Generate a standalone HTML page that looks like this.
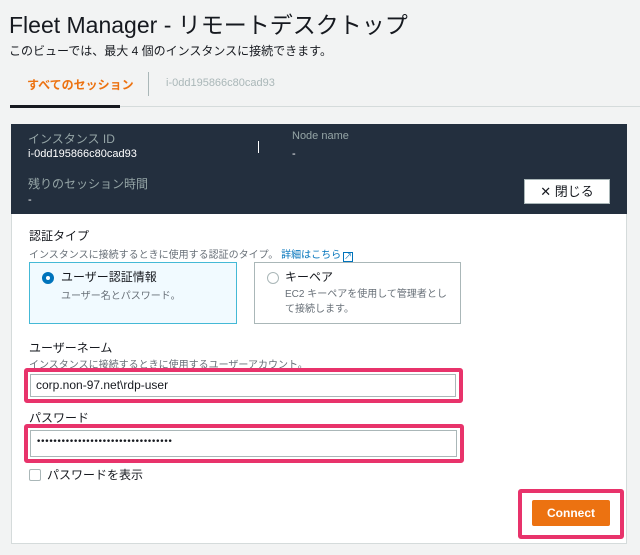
<!DOCTYPE html>
<html><head><meta charset="utf-8"><style>
*{margin:0;padding:0;box-sizing:border-box}
body{width:640px;height:555px;background:#f2f3f3;font-family:"Liberation Sans","Noto Sans CJK JP",sans-serif;color:#16191f;position:relative;overflow:hidden}
.a{position:absolute;white-space:nowrap}
</style></head><body>
<div class="a" style="left:9px;top:6px;font-size:23px;color:#16191f">Fleet Manager - リモートデスクトップ</div>
<div class="a" style="left:9px;top:42px;font-size:12px">このビューでは、最大 4 個のインスタンスに接続できます。</div>
<div class="a" style="left:27px;top:76px;font-size:12px;font-weight:bold;color:#ec7211">すべてのセッション</div>
<div class="a" style="left:148px;top:72px;width:1px;height:24px;background:#aab7b8"></div>
<div class="a" style="left:166px;top:77px;font-size:11px;color:#aab7b8">i-0dd195866c80cad93</div>
<div class="a" style="left:10px;top:106px;width:630px;height:1px;background:#d5dbdb"></div>
<div class="a" style="left:10px;top:105px;width:110px;height:3px;background:#16191f"></div>

<div class="a" style="left:11px;top:124px;width:616px;height:420px;background:#fff;border:1px solid #d5dbdb"></div>
<div class="a" style="left:11px;top:124px;width:616px;height:90px;background:#232f3e"></div>
<div class="a" style="left:28px;top:130px;font-size:12px;color:#95a5a6">インスタンス ID</div>
<div class="a" style="left:28px;top:148px;font-size:11px;color:#fff">i-0dd195866c80cad93</div>
<div class="a" style="left:258px;top:141px;width:1px;height:12px;background:#fff"></div>
<div class="a" style="left:292px;top:130px;font-size:11px;color:#95a5a6">Node name</div>
<div class="a" style="left:292px;top:148px;font-size:11px;color:#fff">-</div>
<div class="a" style="left:28px;top:175px;font-size:12px;color:#95a5a6">残りのセッション時間</div>
<div class="a" style="left:28px;top:194px;font-size:11px;color:#fff">-</div>
<div class="a" style="left:524px;top:179px;width:86px;height:25px;background:#fff;border:1px solid #aab7b8;font-size:13px;text-align:center;line-height:23px;color:#16191f">✕ 閉じる</div>

<div class="a" style="left:29px;top:227px;font-size:12px">認証タイプ</div>
<div class="a" style="left:29px;top:246px;font-size:10px;color:#687078">インスタンスに接続するときに使用する認証のタイプ。 <span style="color:#0073bb">詳細はこちら</span><span style="color:#0073bb;border:1.5px solid #0073bb;display:inline-block;width:10px;height:10px;font-size:8px;line-height:7px;vertical-align:-1px;margin-left:2px">↗</span></div>
<div class="a" style="left:29px;top:262px;width:208px;height:62px;background:#f1faff;border:1px solid #44b9d6"></div>
<div class="a" style="left:42px;top:272px;width:12px;height:12px;border-radius:50%;border:4px solid #0073bb;background:#fff"></div>
<div class="a" style="left:61px;top:268px;font-size:12px">ユーザー認証情報</div>
<div class="a" style="left:61px;top:287px;font-size:10px;color:#687078">ユーザー名とパスワード。</div>
<div class="a" style="left:254px;top:262px;width:207px;height:62px;background:#fff;border:1px solid #aab7b8"></div>
<div class="a" style="left:267px;top:272px;width:12px;height:12px;border-radius:50%;border:1px solid #aab7b8"></div>
<div class="a" style="left:285px;top:268px;font-size:12px">キーペア</div>
<div class="a" style="left:285px;top:287px;font-size:10px;color:#687078;line-height:15px">EC2 キーペアを使用して管理者とし<br>て接続します。</div>

<div class="a" style="left:29px;top:339px;font-size:12px">ユーザーネーム</div>
<div class="a" style="left:29px;top:356px;font-size:10px;color:#687078">インスタンスに接続するときに使用するユーザーアカウント。</div>
<div class="a" style="left:24px;top:368px;width:439px;height:35px;border:4px solid #e8336b;border-radius:3px;background:#fff"></div>
<div class="a" style="left:30px;top:374px;width:426px;height:23px;border:1px solid #aab7b8;background:#fff"></div>
<div class="a" style="left:36px;top:378px;font-size:12px">corp.non-97.net\rdp-user</div>
<div class="a" style="left:29px;top:409px;font-size:12px">パスワード</div>
<div class="a" style="left:24px;top:424px;width:440px;height:39px;border:4px solid #e8336b;border-radius:3px;background:#fff"></div>
<div class="a" style="left:30px;top:430px;width:427px;height:27px;border:1px solid #aab7b8;background:#fff"></div>
<div class="a" style="left:36px;top:437px;font-size:9px;letter-spacing:-1.2px;font-family:'DejaVu Sans',sans-serif">•••••••••••••••••••••••••••••••••</div>
<div class="a" style="left:29px;top:469px;width:12px;height:12px;border:1px solid #aab7b8;border-radius:2px"></div>
<div class="a" style="left:47px;top:466px;font-size:12px">パスワードを表示</div>

<div class="a" style="left:518px;top:489px;width:106px;height:50px;border:4px solid #e8336b;border-radius:3px;background:#fff"></div>
<div class="a" style="left:532px;top:500px;width:78px;height:26px;background:#ec7211;border-radius:2px;color:#fff;font-size:12px;font-weight:bold;text-align:center;line-height:26px">Connect</div>
</body></html>
